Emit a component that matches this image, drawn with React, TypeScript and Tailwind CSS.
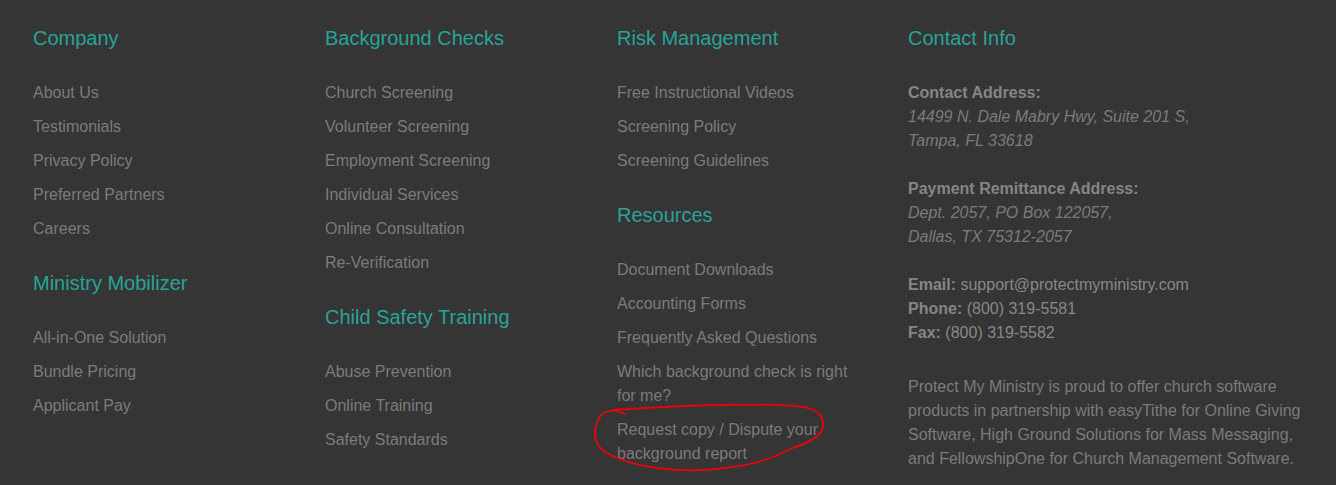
import React from 'react';

type Section = { title: string; links: string[] };

const columns: Section[][] = [
  [
    { title: 'Company', links: ['About Us', 'Testimonials', 'Privacy Policy', 'Preferred Partners', 'Careers'] },
    { title: 'Ministry Mobilizer', links: ['All-in-One Solution', 'Bundle Pricing', 'Applicant Pay'] },
  ],
  [
    {
      title: 'Background Checks',
      links: [
        'Church Screening',
        'Volunteer Screening',
        'Employment Screening',
        'Individual Services',
        'Online Consultation',
        'Re-Verification',
      ],
    },
    { title: 'Child Safety Training', links: ['Abuse Prevention', 'Online Training', 'Safety Standards'] },
  ],
  [
    { title: 'Risk Management', links: ['Free Instructional Videos', 'Screening Policy', 'Screening Guidelines'] },
    {
      title: 'Resources',
      links: [
        'Document Downloads',
        'Accounting Forms',
        'Frequently Asked Questions',
        'Which background check is right for me?',
        'Request copy / Dispute your background report',
      ],
    },
  ],
];

function FooterSection({ section, first }: { section: Section; first: boolean }) {
  return (
    <div className={first ? '' : 'mt-[31px]'}>
      <h3 className="mb-[32px] text-[20px] leading-[22px] text-[#27a398]">{section.title}</h3>
      <ul>
        {section.links.map((link) => (
          <li key={link} className="mb-[10px] max-w-[240px] text-[16px] leading-6 text-[#7b7b7b]">
            <a href="#">{link}</a>
          </li>
        ))}
      </ul>
    </div>
  );
}

export default function App() {
  return (
    <main
      className="relative h-[485px] overflow-hidden bg-[#353535]"
      style={{ fontFamily: '"Liberation Sans", Arial, sans-serif' }}
    >
      <div className="grid grid-cols-[292px_292px_291px_400px] pl-[33px] pt-[27px]">
        {columns.map((col, i) => (
          <div key={i}>
            {col.map((section, j) => (
              <FooterSection key={section.title} section={section} first={j === 0} />
            ))}
          </div>
        ))}

        <div>
          <h3 className="mb-[32px] text-[20px] leading-[22px] text-[#27a398]">Contact Info</h3>
          <div className="text-[16px] leading-6 text-[#7b7b7b]">
            <p className="font-bold text-[#858585]">Contact Address:</p>
            <p className="italic">14499 N. Dale Mabry Hwy, Suite 201 S,</p>
            <p className="italic">Tampa, FL 33618</p>
            <p className="mt-6 font-bold text-[#858585]">Payment Remittance Address:</p>
            <p className="italic">Dept. 2057, PO Box 122057,</p>
            <p className="italic">Dallas, TX 75312-2057</p>
            <p className="mt-6 text-[#888888]">
              <span className="font-bold text-[#858585]">Email:</span> support@protectmyministry.com
            </p>
            <p className="text-[#888888]">
              <span className="font-bold text-[#858585]">Phone:</span> (800) 319-5581
            </p>
            <p className="text-[#888888]">
              <span className="font-bold text-[#858585]">Fax:</span> (800) 319-5582
            </p>
            <p className="mt-[30px]">
              Protect My Ministry is proud to offer church software products in partnership with easyTithe for
              Online Giving Software, High Ground Solutions for Mass Messaging, and FellowshipOne for Church
              Management Software.
            </p>
          </div>
        </div>
      </div>

      {/* hand-drawn annotation */}
      <svg
        className="pointer-events-none absolute inset-0"
        width="1336"
        height="485"
        viewBox="0 0 1336 485"
        fill="none"
      >
        <path
          d="M613 410 C660 407 700 405 723 405 C760 405 790 404 808 408 C822 412 825 420 822 430 C818 438 808 443 793 448 C786 451 780 454 773 457 C760 462 745 466 725 468 C705 471 680 471 657 468 C635 465 617 459 605 452 C597 446 594 438 595 430 C596 422 599 416 604 413 C610 410 618 410 625 414"
          stroke="#e8000b"
          strokeWidth="1.8"
          strokeLinecap="round"
          strokeLinejoin="round"
        />
      </svg>
    </main>
  );
}
